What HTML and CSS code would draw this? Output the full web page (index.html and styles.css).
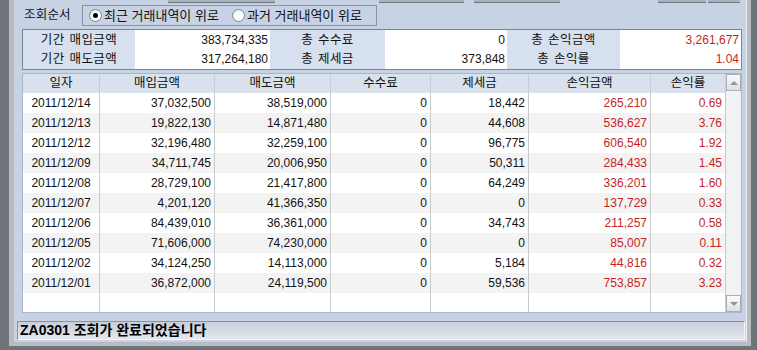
FILE: index.html
```html
<!DOCTYPE html>
<html lang="ko">
<head>
<meta charset="utf-8">
<link rel="stylesheet" href="styles.css">
</head>
<body>
<div class="frame">
  <div class="panel">
    <div class="stubs">
      <span class="stub s1"></span><span class="stub s2"></span><span class="stub s3"></span><span class="stub s4"></span><span class="stub s5"></span>
    </div>
    <div class="order">
      <span class="order-label">조회순서</span>
      <div class="radio-group">
        <label class="radio first checked"><span class="circle"></span><span class="rtext">최근 거래내역이 위로</span></label>
        <label class="radio"><span class="circle"></span><span class="rtext">과거 거래내역이 위로</span></label>
      </div>
    </div>
    <table class="summary">
      <colgroup><col class="c1"><col class="c2"><col class="c3"><col class="c4"><col class="c5"><col class="c6"></colgroup>
      <tr class="r1">
        <td class="lbl">기간 매입금액</td><td class="val">383,734,335</td>
        <td class="lbl">총 수수료</td><td class="val">0</td>
        <td class="lbl">총 손익금액</td><td class="val red">3,261,677</td>
      </tr>
      <tr class="r2">
        <td class="lbl">기간 매도금액</td><td class="val">317,264,180</td>
        <td class="lbl">총 제세금</td><td class="val">373,848</td>
        <td class="lbl">총 손익률</td><td class="val red">1.04</td>
      </tr>
    </table>
    <div class="grid">
      <table class="data">
        <colgroup><col class="g1"><col class="g2"><col class="g3"><col class="g4"><col class="g5"><col class="g6"><col class="g7"></colgroup>
        <thead>
          <tr><th>일자</th><th>매입금액</th><th>매도금액</th><th>수수료</th><th>제세금</th><th>손익금액</th><th>손익률</th></tr>
        </thead>
        <tbody>
          <tr><td class="date">2011/12/14</td><td>37,032,500</td><td>38,519,000</td><td>0</td><td>18,442</td><td class="red">265,210</td><td class="red">0.69</td></tr>
          <tr class="alt"><td class="date">2011/12/13</td><td>19,822,130</td><td>14,871,480</td><td>0</td><td>44,608</td><td class="red">536,627</td><td class="red">3.76</td></tr>
          <tr><td class="date">2011/12/12</td><td>32,196,480</td><td>32,259,100</td><td>0</td><td>96,775</td><td class="red">606,540</td><td class="red">1.92</td></tr>
          <tr class="alt"><td class="date">2011/12/09</td><td>34,711,745</td><td>20,006,950</td><td>0</td><td>50,311</td><td class="red">284,433</td><td class="red">1.45</td></tr>
          <tr><td class="date">2011/12/08</td><td>28,729,100</td><td>21,417,800</td><td>0</td><td>64,249</td><td class="red">336,201</td><td class="red">1.60</td></tr>
          <tr class="alt"><td class="date">2011/12/07</td><td>4,201,120</td><td>41,366,350</td><td>0</td><td>0</td><td class="red">137,729</td><td class="red">0.33</td></tr>
          <tr><td class="date">2011/12/06</td><td>84,439,010</td><td>36,361,000</td><td>0</td><td>34,743</td><td class="red">211,257</td><td class="red">0.58</td></tr>
          <tr class="alt"><td class="date">2011/12/05</td><td>71,606,000</td><td>74,230,000</td><td>0</td><td>0</td><td class="red">85,007</td><td class="red">0.11</td></tr>
          <tr><td class="date">2011/12/02</td><td>34,124,250</td><td>14,113,000</td><td>0</td><td>5,184</td><td class="red">44,816</td><td class="red">0.32</td></tr>
          <tr class="alt"><td class="date">2011/12/01</td><td>36,872,000</td><td>24,119,500</td><td>0</td><td>59,536</td><td class="red">753,857</td><td class="red">3.23</td></tr>
          <tr class="filler"><td></td><td></td><td></td><td></td><td></td><td></td><td></td></tr>
        </tbody>
      </table>
      <div class="vscroll">
        <div class="sbtn"><span class="tri up"></span></div>
        <div class="track"></div>
        <div class="sbtn"><span class="tri down"></span></div>
      </div>
    </div>
    <div class="status">ZA0301 조회가 완료되었습니다</div>
  </div>
</div>
</body>
</html>
```
FILE: styles.css
```css
html, body {
  margin: 0;
  padding: 0;
}
body {
  width: 757px;
  height: 350px;
  overflow: hidden;
  background: #6f737a;
  font-family: "Liberation Sans", "Noto Sans CJK KR", sans-serif;
  font-size: 12px;
  color: #111;
}
.frame {
  margin-left: 9px;
  width: 733px;
  height: 342px;
  padding: 0 4px 4px 5px;
  background: #b8bcc1;
}
.panel {
  box-sizing: border-box;
  width: 733px;
  height: 342px;
  background: #c7d3e4;
  border-right: 1px solid #edf0f4;
  display: flex;
  flex-direction: column;
}
.stubs {
  display: flex;
  height: 3px;
}
.stub {
  display: block;
  box-sizing: border-box;
  height: 3px;
  background: #aab2bd;
  border-bottom: 1px solid #6f7782;
}
.s1 { margin-left: 154px; width: 107px; }
.s2 { margin-left: 104px; width: 85px; }
.s3 { margin-left: 10px; width: 86px; }
.s4 { margin-left: 98px; width: 48px; }
.s5 { margin-left: 2px; width: 32px; }

.order {
  display: flex;
  align-items: center;
  margin-top: 2px;
  height: 21px;
}
.order-label {
  margin-left: 10px;
  width: 58px;
  line-height: 21px;
  font-size: 12.5px;
  letter-spacing: 0.2px;
}
.radio-group {
  box-sizing: border-box;
  width: 295px;
  height: 21px;
  border: 1px solid #8893a3;
  display: flex;
  align-items: center;
  padding-left: 6px;
  font-size: 13px;
}
.radio {
  display: flex;
  align-items: center;
}
.radio.first {
  width: 143px;
}
.circle {
  box-sizing: border-box;
  width: 13px;
  height: 13px;
  border-radius: 50%;
  border: 1px solid #7f8894;
  background: radial-gradient(circle at 60% 60%, #ffffff 40%, #d8dde3 100%);
  margin-right: 2px;
  display: flex;
  align-items: center;
  justify-content: center;
}
.checked .circle::after {
  content: "";
  width: 5px;
  height: 5px;
  border-radius: 50%;
  background: #000;
}
.rtext {
  line-height: 19px;
}

.summary {
  margin: 3px 0 0 8px;
  width: 720px;
  border: 1px solid #7a8493;
  border-collapse: separate;
  border-spacing: 0;
  table-layout: fixed;
}
.summary .c1 { width: 112px; }
.summary .c2 { width: 135px; }
.summary .c3 { width: 115px; }
.summary .c4 { width: 122px; }
.summary .c5 { width: 113px; }
.summary .c6 { width: 121px; }
.summary td {
  padding: 0 2px;
  white-space: nowrap;
  overflow: hidden;
}
.summary .r1 td { height: 20px; line-height: 20px; }
.summary .r2 td { height: 19px; line-height: 19px; }
.summary .lbl {
  background: #d7e0ee;
  text-align: center;
  font-size: 12.5px;
  letter-spacing: 0.4px;
  word-spacing: 1px;
}
.summary .val {
  background: #fff;
  text-align: right;
}
.red {
  color: #c41f25;
}

.grid {
  box-sizing: border-box;
  margin: 3px 0 0 8px;
  width: 720px;
  height: 240px;
  border: 1px solid #a9b7cb;
  background: #fff;
  display: flex;
}
.data {
  width: 703px;
  table-layout: fixed;
  border-collapse: separate;
  border-spacing: 0;
  align-self: flex-start;
}
.g1 { width: 77px; }
.g2 { width: 115px; }
.g3 { width: 116px; }
.g4 { width: 100px; }
.g5 { width: 98px; }
.g6 { width: 122px; }
.g7 { width: 75px; }
.data th {
  height: 19px;
  line-height: 19px;
  padding: 0;
  font-weight: normal;
  font-size: 12.5px;
  background: #d9e1ed;
  border-right: 1px solid #c4cdd9;
  text-align: center;
}
.data td {
  height: 20px;
  line-height: 20px;
  padding: 0 3px 0 0;
  text-align: right;
  border-right: 1px solid #cacaca;
  white-space: nowrap;
  overflow: hidden;
}
.data td.date {
  text-align: center;
  padding: 0;
}
.data tr.alt td {
  background: #f3f3f3;
}
.data tr.filler td {
  height: 19px;
  line-height: 19px;
}
.vscroll {
  width: 15px;
  height: 238px;
  display: flex;
  flex-direction: column;
  background: #f1f2f4;
}
.sbtn {
  box-sizing: border-box;
  width: 15px;
  height: 17px;
  border: 1px solid #a8afb8;
  background: linear-gradient(#fbfbfc, #dde0e4);
  display: flex;
  align-items: center;
  justify-content: center;
}
.track {
  flex: 1;
}
.tri {
  width: 0;
  height: 0;
  border-left: 4px solid transparent;
  border-right: 4px solid transparent;
}
.tri.up {
  border-bottom: 4px solid #8e959e;
}
.tri.down {
  border-top: 4px solid #8e959e;
}

.status {
  box-sizing: border-box;
  margin: 8px 0 0 3px;
  width: 728px;
  height: 19px;
  border: 1px solid;
  border-color: #8a919b #f3f5f8 #f3f5f8 #8a919b;
  background: linear-gradient(#c8cfd9, #e3e7ed);
  font-weight: bold;
  font-size: 14px;
  line-height: 17px;
  padding-left: 2px;
  color: #000;
}
```
